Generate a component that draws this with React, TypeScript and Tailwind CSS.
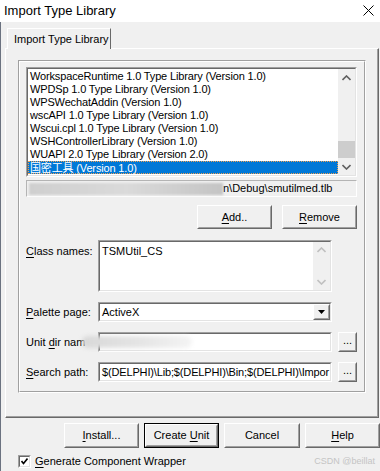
import React from "react";

const items = [
  "WorkspaceRuntime 1.0 Type Library (Version 1.0)",
  "WPDSp 1.0 Type Library (Version 1.0)",
  "WPSWechatAddin (Version 1.0)",
  "wscAPI 1.0 Type Library (Version 1.0)",
  "Wscui.cpl 1.0 Type Library (Version 1.0)",
  "WSHControllerLibrary (Version 1.0)",
  "WUAPI 2.0 Type Library (Version 2.0)",
];

const Sunken = ({ className = "", inner = "", children }: any) => (
  <div
    className={
      "border border-t-[#a0a0a0] border-l-[#a0a0a0] border-b-white border-r-white " +
      className
    }
  >
    <div
      className={
        "h-full w-full border border-t-[#696969] border-l-[#696969] border-b-[#e3e3e3] border-r-[#e3e3e3] bg-white " +
        inner
      }
    >
      {children}
    </div>
  </div>
);

const Raised = ({ className = "", children }: any) => (
  <div
    className={
      "border border-t-white border-l-white border-b-[#696969] border-r-[#696969] " +
      className
    }
  >
    <div className="flex h-full w-full items-center justify-center border border-t-[#f0f0f0] border-l-[#f0f0f0] border-b-[#a0a0a0] border-r-[#a0a0a0] bg-[#f0f0f0]">
      {children}
    </div>
  </div>
);

const Chevron = ({ up, color }: { up?: boolean; color: string }) => (
  <svg width="9" height="6" viewBox="0 0 9 6">
    <path
      d={up ? "M0.5 5 L4.5 1 L8.5 5" : "M0.5 1 L4.5 5 L8.5 1"}
      fill="none"
      stroke={color}
      strokeWidth="1.6"
    />
  </svg>
);

const U = ({ children }: any) => <span className="underline underline-offset-[2px]">{children}</span>;

const App = () => {
  return (
    <div
      className="h-[471px] w-[380px] overflow-hidden bg-[#f0f0f0] text-[11px] leading-[13px] text-black"
      style={{ fontFamily: '"Liberation Sans", Arial, sans-serif' }}
    >
      {/* title bar */}
      <div className="flex h-[22px] items-center justify-between bg-white pl-[4px] pr-[6px]">
        <div className="text-[13px] leading-[18px] text-black">Import Type Library</div>
        <svg width="11" height="11" viewBox="0 0 11 11" className="mb-[2px]">
          <path d="M0.5 0.5 L10.5 10.5 M10.5 0.5 L0.5 10.5" stroke="#000" strokeWidth="1" />
        </svg>
      </div>

      <div className="h-[449px] border-l border-l-[#6b7280] pt-[6px]">
        {/* tab */}
        <div className="relative z-10 ml-[6px] flex h-[21px] w-[104px] items-center border-t border-l border-r border-t-white border-l-white border-r-[#696969] bg-[#f0f0f0] pl-[6px] -mb-px">
          Import Type Library
        </div>

        {/* tab panel */}
        <div className="ml-[4px] h-[370px] w-[374px] border border-t-white border-l-white border-b-[#696969] border-r-[#696969]">
          <div className="h-full w-full border-r border-b border-r-[#a0a0a0] border-b-[#a0a0a0] pl-[12px] pt-[11px]">
            {/* group */}
            <div className="h-[333px] w-[348px] border border-t-[#a0a0a0] border-l-[#a0a0a0] border-b-white border-r-white">
              <div className="h-full w-full border border-t-white border-l-white border-b-[#a0a0a0] border-r-[#a0a0a0] pl-[6px] pt-[5px]">
                {/* list box */}
                <Sunken className="h-[110px] w-[331px]" inner="flex">
                  <div className="flex-1 pt-px tracking-[-0.15px]">
                    {items.map((t) => (
                      <div key={t} className="h-[13px] whitespace-nowrap overflow-hidden pl-[2px]">
                        {t}
                      </div>
                    ))}
                    <div className="h-[13px] whitespace-nowrap border border-dotted border-[#f0a050] bg-[#0078d7] pl-[1px] text-white">
                      <span style={{ fontFamily: '"Liberation Sans", "Noto Sans CJK SC", sans-serif' }}>
                        国密工具
                      </span>{" "}
                      (Version 1.0)
                    </div>
                  </div>
                  <div className="flex w-[17px] flex-col bg-[#f0f0f0]">
                    <div className="flex h-[17px] items-center justify-center">
                      <Chevron up color="#606060" />
                    </div>
                    <div className="flex-1" />
                    <div className="h-[17px] bg-[#cdcdcd]" />
                    <div className="flex h-[17px] items-center justify-center">
                      <Chevron color="#606060" />
                    </div>
                  </div>
                </Sunken>

                {/* path */}
                <div className="relative mt-[3px] flex h-[17px] w-[331px] items-center border border-t-[#b4b4b4] border-l-[#b4b4b4] border-b-white border-r-white">
                  <div className="ml-[2px] h-[12px] w-[194px] bg-gradient-to-r from-[#cfcfcf] via-[#dadada] to-[#c4c4c4] blur-[1px]" />
                  <span className="whitespace-nowrap">n\Debug\smutilmed.tlb</span>
                </div>

                {/* add / remove */}
                <div className="mt-[8px] flex w-[331px] justify-end gap-[10px]">
                  <Raised className="h-[24px] w-[75px]">
                    <span>
                      <U>A</U>dd..
                    </span>
                  </Raised>
                  <Raised className="h-[24px] w-[75px]">
                    <span>
                      <U>R</U>emove
                    </span>
                  </Raised>
                </div>

                {/* class names */}
                <div className="mt-[11px] flex">
                  <div className="w-[72px] pt-[5px]">
                    <U>C</U>lass names:
                  </div>
                  <Sunken className="h-[52px] w-[234px]" inner="flex">
                    <div className="flex-1 pl-[2px] pt-[3px]">TSMUtil_CS</div>
                    <div className="flex w-[17px] flex-col justify-between bg-[#f0f0f0] py-[5px]">
                      <div className="flex justify-center">
                        <Chevron up color="#c0c0c0" />
                      </div>
                      <div className="flex justify-center">
                        <Chevron color="#c0c0c0" />
                      </div>
                    </div>
                  </Sunken>
                </div>

                {/* palette page */}
                <div className="mt-[10px] flex h-[20px] items-center">
                  <div className="w-[72px]">
                    <U>P</U>alette page:
                  </div>
                  <Sunken className="h-[20px] w-[234px]" inner="flex items-center">
                    <div className="flex-1 pl-[2px]">ActiveX</div>
                    <Raised className="h-[16px] w-[17px]">
                      <svg width="7" height="4" viewBox="0 0 7 4">
                        <path d="M0 0 L7 0 L3.5 4 Z" fill="#000" />
                      </svg>
                    </Raised>
                  </Sunken>
                </div>

                {/* unit dir */}
                <div className="relative mt-[10px] flex h-[20px] items-center">
                  <div className="w-[72px] whitespace-nowrap">
                    Unit <U>d</U>ir nam
                  </div>
                  <Sunken className="h-[20px] w-[234px]" />
                  <Raised className="ml-[6px] h-[20px] w-[19px]">
                    <span className="pb-[3px]">...</span>
                  </Raised>
                  <div className="absolute left-[56px] top-[4px] h-[12px] w-[110px] rounded-full bg-gradient-to-r from-[#d8d8d8] via-[#e4e4e4] to-[#f4f4f4] blur-[2px]" />
                </div>

                {/* search path */}
                <div className="mt-[10px] flex h-[20px] items-center">
                  <div className="w-[72px]">
                    <U>S</U>earch path:
                  </div>
                  <Sunken className="h-[20px] w-[234px]" inner="flex items-center overflow-hidden">
                    <div className="whitespace-nowrap pl-[2px] tracking-[-0.15px]">
                      $(DELPHI)\Lib;$(DELPHI)\Bin;$(DELPHI)\Impor
                    </div>
                  </Sunken>
                  <Raised className="ml-[6px] h-[20px] w-[19px]">
                    <span className="pb-[3px]">...</span>
                  </Raised>
                </div>
              </div>
            </div>
          </div>
        </div>

        {/* bottom buttons */}
        <div className="ml-[63px] mt-[5px] flex gap-[5px]">
          <Raised className="h-[25px] w-[75px]">
            <span>
              <U>I</U>nstall...
            </span>
          </Raised>
          <div className="h-[25px] w-[75px] border border-black">
            <Raised className="h-full w-full">
              <span>
                Create <U>U</U>nit
              </span>
            </Raised>
          </div>
          <Raised className="h-[25px] w-[76px]">
            <span>Cancel</span>
          </Raised>
          <Raised className="h-[25px] w-[75px]">
            <span>
              <U>H</U>elp
            </span>
          </Raised>
        </div>

        {/* checkbox + watermark */}
        <div className="mt-[7px] flex items-center justify-between pl-[17px] pr-[5px]">
          <div className="flex items-center gap-[4px]">
            <Sunken className="h-[13px] w-[13px]" inner="flex items-center justify-center">
              <svg width="7" height="7" viewBox="0 0 7 7">
                <path d="M0.5 3 L2.5 5.5 L6.5 0.5" fill="none" stroke="#000" strokeWidth="1.6" />
              </svg>
            </Sunken>
            <span>
              <U>G</U>enerate Component Wrapper
            </span>
          </div>
          <span className="text-[9px] text-[#c4c4c4]">CSDN @beillat</span>
        </div>
      </div>
    </div>
  );
};

export default App;
